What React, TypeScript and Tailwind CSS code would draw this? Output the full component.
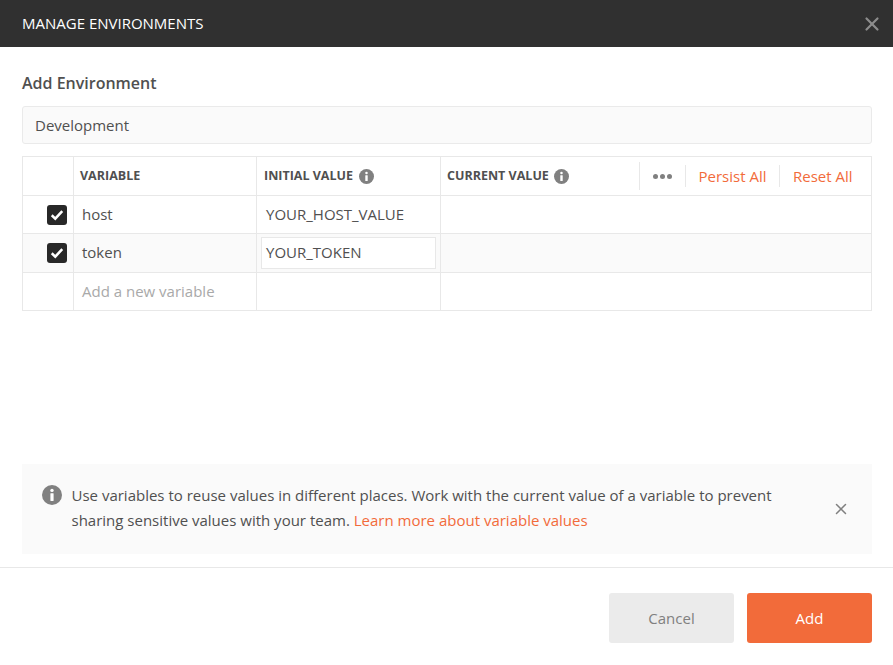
import { X } from 'lucide-react';

function InfoIcon({ size = 15 }: { size?: number }) {
  return (
    <svg width={size} height={size} viewBox="0 0 20 20" className="shrink-0">
      <circle cx="10" cy="10" r="10" fill="#808080" />
      <circle cx="10" cy="5.4" r="1.7" fill="#fff" />
      <rect x="8.4" y="8.2" width="3.2" height="7.8" rx="0.4" fill="#fff" />
    </svg>
  );
}

function Check() {
  return (
    <div className="flex size-5 items-center justify-center rounded-[3px] bg-[#282828]">
      <svg width="16" height="16" viewBox="0 0 14 14" fill="none">
        <path d="M2.4 7.2 5.5 10.2 11.6 3.7" stroke="#fff" strokeWidth="2.2" />
      </svg>
    </div>
  );
}

const cell = 'flex items-center border-l border-[#e8e8e8]';

export default function App() {
  return (
    <div className="flex h-[665px] flex-col bg-white font-['Open_Sans',sans-serif] text-[15px] text-[#505050]">
      <header className="flex h-[47px] shrink-0 items-center justify-between bg-[#303030] pr-[10px] pl-[22px]">
        <h1 className="text-[15px] font-medium text-white">MANAGE ENVIRONMENTS</h1>
        <X className="size-[22px] text-[#8c8c8c]" strokeWidth={2.4} />
      </header>

      <main className="flex flex-1 flex-col px-[21px] pt-[25px] pl-[22px]">
        <h2 className="h-[22px] text-[16px] leading-[22px] font-semibold text-[#505050]">Add Environment</h2>
        <div className="mt-[12px] flex h-[38px] items-center rounded-[3px] border border-[#eaeaea] bg-[#fafafa] px-[12px]">
          Development
        </div>

        <div className="mt-[12px] border-r border-b border-[#e8e8e8]">
          <div className="grid h-[39px] grid-cols-[51px_183px_184px_1fr] border-t border-[#e8e8e8] text-[12.5px] font-bold">
            <div className={cell} />
            <div className={`${cell} pl-[6px]`}>VARIABLE</div>
            <div className={`${cell} gap-[6px] pl-[7px]`}>
              INITIAL VALUE <InfoIcon />
            </div>
            <div className={`${cell} pl-[6px]`}>
              <span className="mr-[5px]">CURRENT VALUE</span>
              <InfoIcon />
              <div className="ml-auto flex items-center text-[15px] font-normal text-[#f26b3a]">
                <div className="flex h-[28px] w-[46px] items-center justify-center gap-[2px] border-l border-[#e8e8e8]">
                  <span className="size-[5px] rounded-full bg-[#808080]" />
                  <span className="size-[5px] rounded-full bg-[#808080]" />
                  <span className="size-[5px] rounded-full bg-[#808080]" />
                </div>
                <div className="flex h-[22px] w-[94px] items-center justify-center border-l border-[#e8e8e8]">Persist All</div>
                <div className="flex h-[22px] w-[92px] items-center border-l border-[#e8e8e8] pl-[13px]">Reset All</div>
              </div>
            </div>
          </div>

          <div className="grid h-[38px] grid-cols-[51px_183px_184px_1fr] border-t border-[#e8e8e8]">
            <div className={`${cell} justify-end pr-[6px]`}><Check /></div>
            <div className={`${cell} pl-[8px]`}>host</div>
            <div className={`${cell} pl-[9px]`}>YOUR_HOST_VALUE</div>
            <div className={cell} />
          </div>

          <div className="grid h-[39px] grid-cols-[51px_183px_184px_1fr] border-t border-[#e8e8e8] bg-[#fafafa]">
            <div className={`${cell} justify-end pr-[6px]`}><Check /></div>
            <div className={`${cell} pb-[1px] pl-[8px]`}>token</div>
            <div className={`${cell} px-[4px]`}>
              <div className="flex h-[32px] w-full items-center border border-[#e8e8e8] bg-white pb-[1px] pl-[4px]">YOUR_TOKEN</div>
            </div>
            <div className={cell} />
          </div>

          <div className="grid h-[38px] grid-cols-[51px_183px_184px_1fr] border-t border-[#e8e8e8]">
            <div className={cell} />
            <div className={`${cell} pl-[8px] text-[#a9a9a9]`}>Add a new variable</div>
            <div className={cell} />
            <div className={cell} />
          </div>
        </div>

        <div className="mt-auto flex h-[90px] items-center bg-[#fafafa] px-[20px]">
          <div className="flex flex-1 gap-[9.5px] self-start pt-[8px]">
            <div className="pt-[13px]"><InfoIcon size={20} /></div>
            <p className="w-[730px] pt-[11px] leading-[25px]">
              Use variables to reuse values in different places. Work with the current value of a variable to prevent
              sharing sensitive values with your team.{' '}
              <span className="text-[#f26b3a]">Learn more about variable values</span>
            </p>
          </div>
          <X className="mr-[2px] size-[18px] text-[#808080]" strokeWidth={2} />
        </div>
      </main>

      <footer className="mt-[13px] flex h-[98px] shrink-0 justify-end gap-[13px] border-t border-[#e8e8e8] pt-[25px] pr-[21px]">
        <button className="h-[50px] w-[125px] rounded-[3px] bg-[#ebebeb] text-[#808080]">Cancel</button>
        <button className="h-[50px] w-[125px] rounded-[3px] bg-[#f26b3a] font-medium text-white">Add</button>
      </footer>
    </div>
  );
}
